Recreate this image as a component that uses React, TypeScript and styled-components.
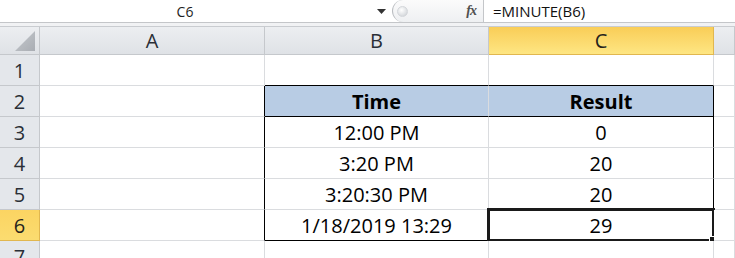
import React from "react";
import styled, { createGlobalStyle, css } from "styled-components";

const GlobalStyle = createGlobalStyle`
  html, body { margin: 0; padding: 0; background: #ffffff; }
  body { font-family: "Open Sans", "Liberation Sans", sans-serif; }
`;

const Page = styled.div`
  width: 735px;
  height: 258px;
  overflow: hidden;
  background: #ffffff;
  display: flex;
  flex-direction: column;
`;

const FormulaBar = styled.div`
  height: 22px;
  display: flex;
  align-items: stretch;
  border-bottom: 1px solid #c4c6c9;
  background: #ffffff;
  flex-shrink: 0;
`;

const NameBox = styled.div`
  width: 370px;
  display: flex;
  align-items: center;
  justify-content: center;
  font-size: 14px;
  color: #1e1e1e;
`;

const DropArrow = styled.div`
  width: 22px;
  display: flex;
  align-items: center;
  justify-content: center;
`;

const Splitter = styled.div`
  width: 91px;
  display: flex;
  align-items: center;
  justify-content: space-between;
  box-sizing: border-box;
  border-left: 1px solid #b9bcc0;
  border-radius: 11px 0 0 11px;
  background: linear-gradient(#fbfbfb, #eef0f2);
  padding: 0 7px 0 4px;
`;

const Grip = styled.div`
  width: 9px;
  height: 9px;
  border-radius: 50%;
  background: radial-gradient(circle at 40% 35%, #ffffff, #c9cdd2);
  border: 1px solid #d3d6da;
`;

const Fx = styled.span`
  font-family: "Liberation Serif", serif;
  font-style: italic;
  font-weight: bold;
  font-size: 14px;
  color: #505050;
  letter-spacing: -1px;
`;

const FormulaInput = styled.div`
  flex: 1;
  border-left: 1px solid #c4c6c9;
  display: flex;
  align-items: center;
  padding-left: 9px;
  font-size: 15px;
  color: #111111;
`;

const Band = styled.div`
  height: 3px;
  background: #f1f2f4;
  border-bottom: 1px solid #c9ccd0;
  flex-shrink: 0;
`;

const Sheet = styled.div`
  display: grid;
  grid-template-columns: 40px 225px 224px 225px 1fr;
  grid-template-rows: 28px;
  grid-auto-rows: 31px;
`;

const HeaderCell = styled.div<{ $active?: boolean; $row?: boolean }>`
  position: relative;
  box-sizing: border-box;
  display: flex;
  align-items: center;
  justify-content: center;
  font-size: 20px;
  color: #2a2f36;
  border-right: 1px solid #c5c8cc;
  border-bottom: 1px solid #c5c8cc;
  background: ${(p) => (p.$row ? "#e4e7eb" : "linear-gradient(#eceef1, #dfe2e6)")};
  ${(p) =>
    p.$active &&
    css`
      background: ${p.$row ? "linear-gradient(#fbd462, #fbdc70)" : "linear-gradient(#f9cd57, #fee683)"};
      border-color: #e1b74f;
      color: #25231c;
    `}
`;

const Corner = styled(HeaderCell)`
  justify-content: flex-end;
  align-items: flex-end;
  padding: 0 4px 3px 0;
`;

const Cell = styled.div<{
  $bold?: boolean;
  $fill?: string;
  $dr?: boolean;
  $db?: boolean;
}>`
  position: relative;
  box-sizing: border-box;
  display: flex;
  align-items: center;
  justify-content: center;
  font-family: "Open Sans", "Liberation Sans", sans-serif;
  font-size: 20px;
  color: #000000;
  font-weight: ${(p) => (p.$bold ? 700 : 400)};
  background: ${(p) => p.$fill || "#ffffff"};
  border-right: 1px solid ${(p) => (p.$dr ? "#000000" : "#dadcdf")};
  border-bottom: 1px solid ${(p) => (p.$db ? "#000000" : "#dadcdf")};
`;

const Selection = styled.div`
  position: absolute;
  left: -2px;
  top: -2px;
  right: -2px;
  bottom: -2px;
  border: 3px solid #1a1a1a;
  pointer-events: none;
`;

const FillHandle = styled.div`
  position: absolute;
  right: -4px;
  bottom: -4px;
  width: 5px;
  height: 5px;
  background: #1a1a1a;
  border: 1px solid #ffffff;
`;

type Row = { b: string; c: string };

const rows: (Row | null)[] = [
  null,
  { b: "Time", c: "Result" },
  { b: "12:00 PM", c: "0" },
  { b: "3:20 PM", c: "20" },
  { b: "3:20:30 PM", c: "20" },
  { b: "1/18/2019 13:29", c: "29" },
  null,
];

export default function App() {
  return (
    <Page>
      <GlobalStyle />
      <FormulaBar>
        <NameBox>C6</NameBox>
        <DropArrow>
          <svg width="9" height="5" viewBox="0 0 9 5">
            <path d="M0 0 H9 L4.5 5 Z" fill="#333" />
          </svg>
        </DropArrow>
        <Splitter>
          <Grip />
          <Fx>fx</Fx>
        </Splitter>
        <FormulaInput>=MINUTE(B6)</FormulaInput>
      </FormulaBar>
      <Band />
      <Sheet>
        <Corner>
          <svg width="20" height="20" viewBox="0 0 20 20">
            <defs>
              <linearGradient id="tri" x1="0" y1="0" x2="1" y2="1">
                <stop offset="0" stopColor="#c6cace" />
                <stop offset="1" stopColor="#a9adb3" />
              </linearGradient>
            </defs>
            <path d="M20 0 V20 H0 Z" fill="url(#tri)" />
          </svg>
        </Corner>
        <HeaderCell>A</HeaderCell>
        <HeaderCell>B</HeaderCell>
        <HeaderCell $active>C</HeaderCell>
        <HeaderCell />
        {rows.map((r, i) => {
          const n = i + 1;
          const inTable = n >= 1 && n <= 6;
          const isHead = n === 2;
          return (
            <React.Fragment key={n}>
              <HeaderCell $row $active={n === 6}>
                {n}
              </HeaderCell>
              <Cell $dr={n >= 2 && n <= 6} />
              <Cell
                $bold={isHead}
                $fill={isHead ? "#b8cce4" : undefined}
                $db={inTable && (n === 1 || n === 2 || n === 6)}
              >
                {r?.b}
              </Cell>
              <Cell
                $bold={isHead}
                $fill={isHead ? "#b8cce4" : undefined}
                $dr={n >= 2 && n <= 6}
                $db={inTable && (n === 1 || n === 2 || n === 6)}
              >
                {r?.c}
                {n === 6 && (
                  <Selection>
                    <FillHandle />
                  </Selection>
                )}
              </Cell>
              <Cell />
            </React.Fragment>
          );
        })}
      </Sheet>
    </Page>
  );
}
